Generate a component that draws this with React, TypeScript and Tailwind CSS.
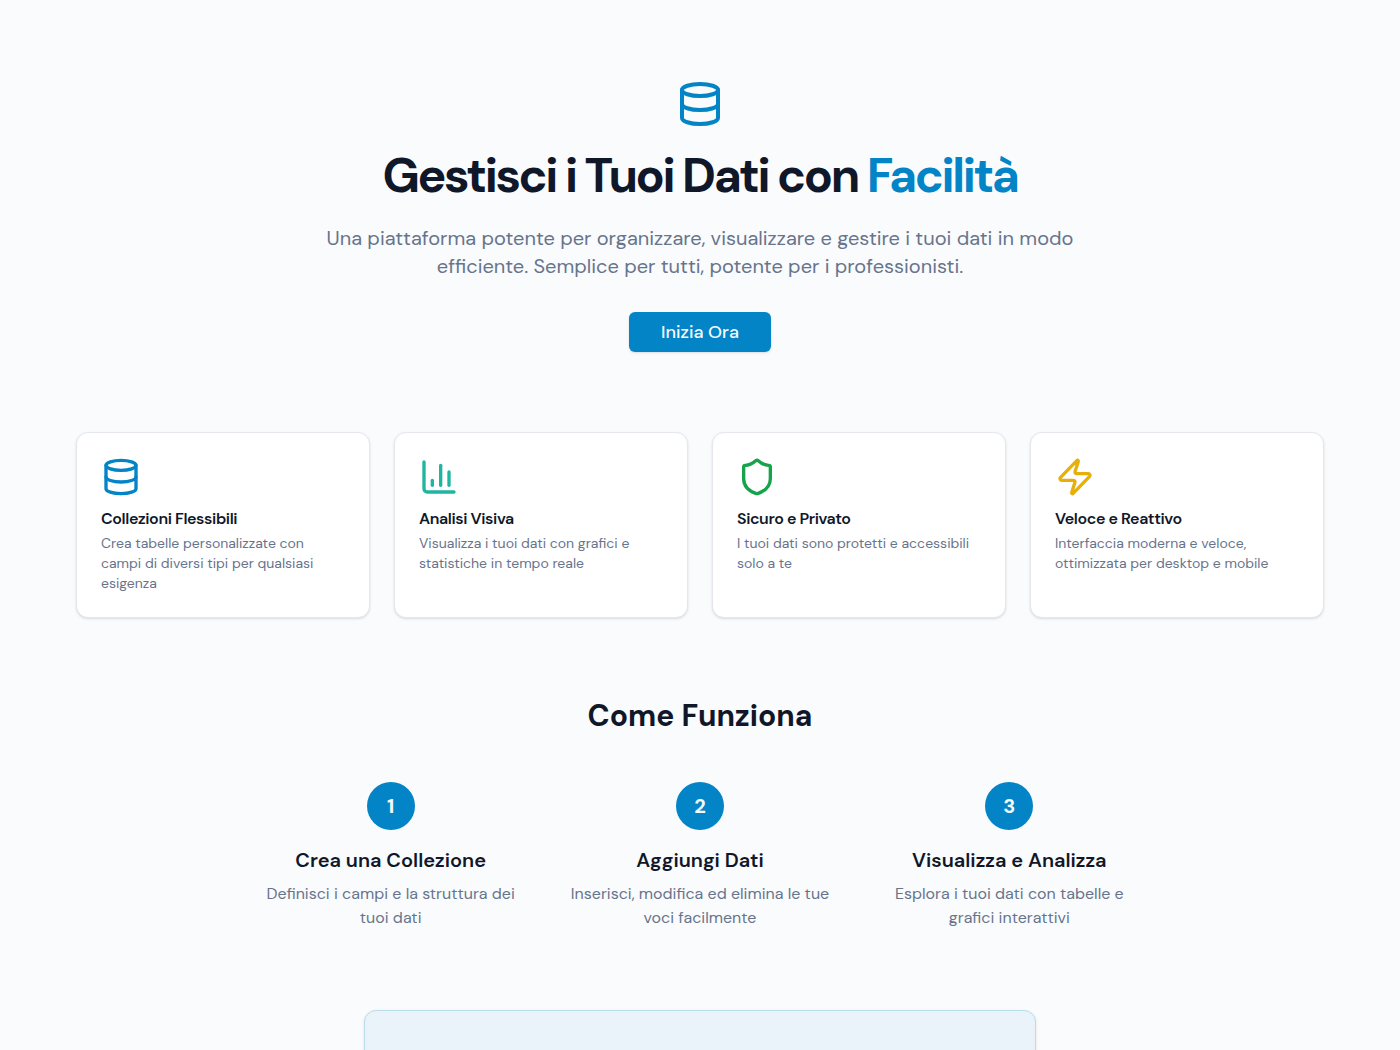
import { BarChart3, Database, Shield, Zap } from 'lucide-react';

const features = [
  {
    icon: Database,
    color: 'text-[#0284c7]',
    title: 'Collezioni Flessibili',
    description: 'Crea tabelle personalizzate con campi di diversi tipi per qualsiasi esigenza',
  },
  {
    icon: BarChart3,
    color: 'text-[#1fb5a3]',
    title: 'Analisi Visiva',
    description: 'Visualizza i tuoi dati con grafici e statistiche in tempo reale',
  },
  {
    icon: Shield,
    color: 'text-[#16a34a]',
    title: 'Sicuro e Privato',
    description: 'I tuoi dati sono protetti e accessibili solo a te',
  },
  {
    icon: Zap,
    color: 'text-[#e7b008]',
    title: 'Veloce e Reattivo',
    description: 'Interfaccia moderna e veloce, ottimizzata per desktop e mobile',
  },
];

const steps = [
  { title: 'Crea una Collezione', description: 'Definisci i campi e la struttura dei tuoi dati' },
  { title: 'Aggiungi Dati', description: 'Inserisci, modifica ed elimina le tue voci facilmente' },
  { title: 'Visualizza e Analizza', description: 'Esplora i tuoi dati con tabelle e grafici interattivi' },
];

export default function App() {
  return (
    <main className="min-h-screen bg-[#f9fbfd] font-['DM_Sans','Open_Sans',sans-serif] text-[#0f1729]">
      <div className="mx-auto max-w-7xl px-4 py-20">
        <section className="text-center">
          <Database className="mx-auto size-12 text-[#0284c7]" />
          <h1 className="mt-6 text-5xl leading-12 font-bold tracking-tighter">
            Gestisci i Tuoi Dati con <span className="text-[#0284c7]">Facilità</span>
          </h1>
          <p className="mx-auto mt-6 max-w-3xl text-xl text-[#67748c]">
            Una piattaforma potente per organizzare, visualizzare e gestire i tuoi dati in modo
            efficiente. Semplice per tutti, potente per i professionisti.
          </p>
          <button
            type="button"
            className="mt-8 h-10 rounded-md bg-[#0284c7] px-8 text-lg font-medium text-[#f8fafc] shadow-sm"
          >
            Inizia Ora
          </button>
        </section>

        <section className="mt-20 grid gap-6 md:grid-cols-2 lg:grid-cols-4">
          {features.map(({ icon: Icon, color, title, description }) => (
            <article key={title} className="rounded-xl border border-[#e4e8ec] bg-white p-6 shadow-sm">
              <Icon className={`size-10 ${color}`} />
              <h3 className="mt-3 leading-5 font-semibold tracking-tight">{title}</h3>
              <p className="mt-1 text-sm text-[#67748c]">{description}</p>
            </article>
          ))}
        </section>

        <section className="mt-20">
          <h2 className="text-center text-3xl font-bold">Come Funziona</h2>
          <div className="mx-auto mt-12 grid max-w-4xl gap-8 md:grid-cols-3">
            {steps.map((step, index) => (
              <div key={step.title} className="text-center">
                <div className="mx-auto flex size-12 items-center justify-center rounded-full bg-[#0284c7] text-xl font-bold text-[#f8fafc]">
                  {index + 1}
                </div>
                <h3 className="mt-4 text-xl font-semibold">{step.title}</h3>
                <p className="mt-2 text-[#67748c]">{step.description}</p>
              </div>
            ))}
          </div>
        </section>

        <section className="mx-auto mt-20 min-h-48 max-w-2xl rounded-xl border border-[#bbdcea] bg-[#eaf3f9] p-6 shadow-sm" />
      </div>
    </main>
  );
}
